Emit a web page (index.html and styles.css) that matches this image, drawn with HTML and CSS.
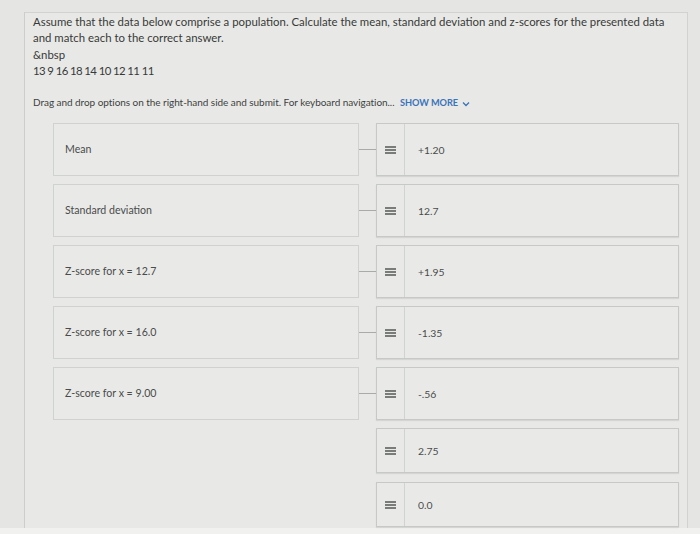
FILE: index.html
```html
<!DOCTYPE html>
<html>
<head>
<meta charset="utf-8">
<link rel="stylesheet" href="styles.css">
</head>
<body>
<div class="page">
  <div class="panel">
    <div class="question">
      <p>Assume that the data below comprise a population. Calculate the mean, standard deviation and z-scores for the presented data and match each to the correct answer.</p>
      <p>&amp;nbsp</p>
      <p class="data">13 9 16 18 14 10 12 11 11</p>
    </div>
    <div class="hint">Drag and drop options on the right-hand side and submit. For keyboard navigation... <span class="more">SHOW MORE <svg class="chev" width="8" height="6" viewBox="0 0 8 6"><path d="M1 1.5 L4 4.5 L7 1.5" fill="none" stroke="#3b73b9" stroke-width="1.3"/></svg></span></div>
    <div class="match">
      <div class="row">
        <div class="prompt">Mean</div>
        <div class="link"></div>
        <div class="answer"><span class="handle"><i></i></span><span class="val">+1.20</span></div>
      </div>
      <div class="row">
        <div class="prompt">Standard deviation</div>
        <div class="link"></div>
        <div class="answer"><span class="handle"><i></i></span><span class="val">12.7</span></div>
      </div>
      <div class="row">
        <div class="prompt">Z-score for x = 12.7</div>
        <div class="link"></div>
        <div class="answer"><span class="handle"><i></i></span><span class="val">+1.95</span></div>
      </div>
      <div class="row">
        <div class="prompt">Z-score for x = 16.0</div>
        <div class="link"></div>
        <div class="answer"><span class="handle"><i></i></span><span class="val">-1.35</span></div>
      </div>
      <div class="row">
        <div class="prompt">Z-score for x = 9.00</div>
        <div class="link"></div>
        <div class="answer"><span class="handle"><i></i></span><span class="val">-.56</span></div>
      </div>
      <div class="row short">
        <div class="empty"></div>
        <div class="nolink"></div>
        <div class="answer"><span class="handle"><i></i></span><span class="val">2.75</span></div>
      </div>
      <div class="row short">
        <div class="empty"></div>
        <div class="nolink"></div>
        <div class="answer"><span class="handle"><i></i></span><span class="val">0.0</span></div>
      </div>
    </div>
  </div>
</div>
</body>
</html>
```

FILE: styles.css
```css
html, body {
  margin: 0;
  padding: 0;
}
body {
  background: #e5e6e4;
  font-family: Lato, "Open Sans", sans-serif;
  color: #3c3d3c;
  width: 700px;
  height: 534px;
  overflow: hidden;
}
.page {
  padding: 12px 0 0 24px;
  box-sizing: border-box;
  border-bottom: 6px solid #f1f2f0;
  height: 534px;
}
.panel {
  width: 664px;
  height: 516px;
  box-sizing: border-box;
  border-top: 1px solid #d1d3d1;
  border-left: 1px solid #cbcecb;
  border-right: 1px solid #d1d3d1;
  background: #e8e9e7;
  padding: 1px 0 0 8px;
}
.question {
  font-size: 11.4px;
  line-height: 16.3px;
  color: #383938;
  width: 638px;
}
.question p {
  margin: 0;
}
.data {
  letter-spacing: -0.6px;
}
.hint {
  margin-top: 16px;
  font-size: 10px;
  line-height: 14px;
  color: #3e3f3e;
  letter-spacing: -0.05px;
}
.more {
  color: #3b73b9;
  font-weight: bold;
  font-size: 9.2px;
  margin-left: 3px;
}
.chev {
  vertical-align: middle;
  margin-left: 2px;
}
.match {
  margin: 13px 0 0 20px;
  display: flex;
  flex-direction: column;
  gap: 8px;
}
.row {
  display: grid;
  grid-template-columns: 306px 17px 303px;
  height: 53px;
}
.row.short {
  height: 45px;
}
.row.short + .row.short {
  margin-top: 1px;
}
.prompt {
  border: 1px solid #d0d2d0;
  background: #e9eae8;
  font-size: 10.6px;
  color: #4a4b4a;
  display: flex;
  align-items: center;
  padding-left: 11px;
  padding-bottom: 2px;
  box-sizing: border-box;
}
.link {
  display: flex;
  align-items: center;
}
.link::before {
  content: "";
  display: block;
  width: 100%;
  height: 1px;
  background: #a9aba9;
}
.answer {
  border: 1px solid #c7c9c7;
  background: #e9eae8;
  box-shadow: 0 1px 1px rgba(0,0,0,0.08);
  display: flex;
  align-items: stretch;
  box-sizing: border-box;
}
.handle {
  width: 27px;
  flex: none;
  border-right: 1px solid #d1d3d1;
  display: flex;
  align-items: center;
  justify-content: center;
}
.handle i {
  display: block;
  width: 11px;
  height: 2px;
  background: #7a7c7a;
  box-shadow: 0 3px 0 #7a7c7a, 0 6px 0 #7a7c7a;
  margin-top: -6px;
}
.val {
  display: flex;
  align-items: center;
  padding-left: 13px;
  font-size: 10.4px;
  color: #4a4b4a;
}
```
